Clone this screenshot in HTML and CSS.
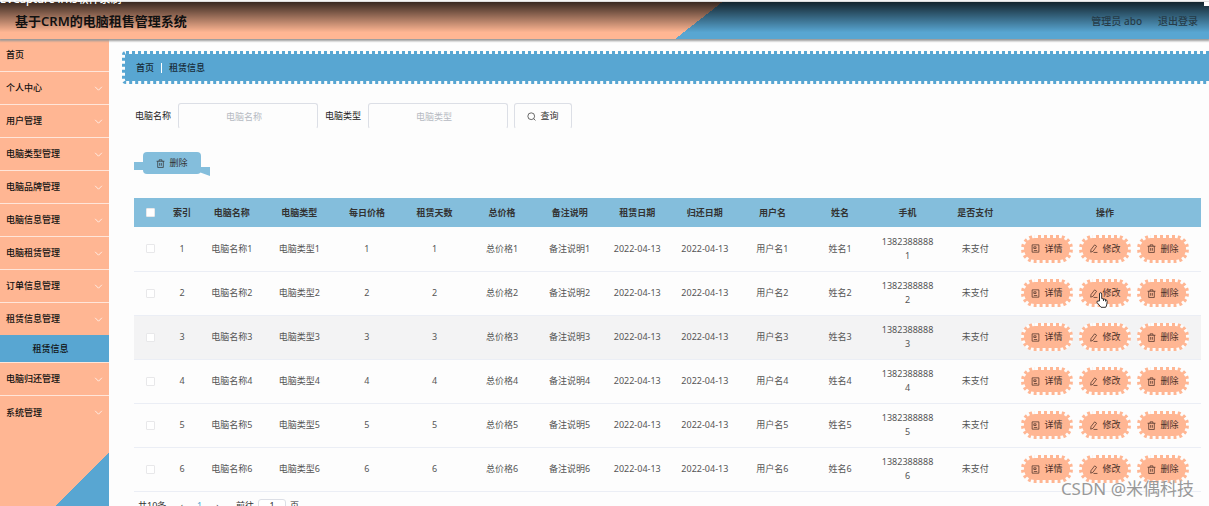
FILE: index.html
```html
<!DOCTYPE html>
<html lang="zh-CN">
<head>
<meta charset="utf-8">
<title>基于CRM的电脑租售管理系统</title>
<link rel="stylesheet" href="styles.css">
</head>
<body>
<svg class="sprite" aria-hidden="true">
  <symbol id="i-trash" viewBox="0 0 16 16"><path d="M1 4h14M5.500 4V1.500h5V4M3 4v11h10V4M6.500 7v5M9.500 7v5"/></symbol>
  <symbol id="i-doc" viewBox="0 0 16 16"><path d="M2 1.500h12v13H2zM5 5h4v3H5zM5 11.500h6"/></symbol>
  <symbol id="i-edit" viewBox="0 0 16 16"><path d="M10 1.500l3.500 2.500-6.500 9-4 1.500.500-4.500zM8 15h7"/></symbol>
  <symbol id="i-search" viewBox="0 0 16 16"><circle cx="7.500" cy="7.500" r="6"/><path d="M12 12l3 3"/></symbol>
  <symbol id="i-down" viewBox="0 0 16 16"><path d="M2 5l6 6 6-6"/></symbol>
</svg>
<div class="recorder"><span>EVCapture irhs软件录制</span><i class="recorder-mark"></i></div>
<header class="topbar">
  <h1 class="brand">基于CRM的电脑租售管理系统</h1>
  <nav class="account"><span>管理员 abo</span><a href="#">退出登录</a></nav>
</header>
<div class="shell">
  <aside class="sidebar">
    <ul class="menu" id="menu"></ul>
  </aside>
  <main class="content">
    <nav class="crumbs"><a href="#">首页</a><span class="crumb-sep"></span><span>租赁信息</span></nav>
    <form class="search">
      <label class="field-label" for="name">电脑名称</label>
      <input class="field" id="name" type="text" placeholder="电脑名称">
      <label class="field-label" for="type">电脑类型</label>
      <input class="field" id="type" type="text" placeholder="电脑类型">
      <button class="query" type="button"><svg class="icon"><use href="#i-search"/></svg>查询</button>
    </form>
    <div class="tools">
      <button class="bulk-delete" type="button"><svg class="icon"><use href="#i-trash"/></svg>删除</button>
    </div>
    <table class="grid">
      <colgroup><col class="col-narrow"><col class="col-narrow"><col span="12"><col class="col-actions"></colgroup>
      <thead><tr id="head"></tr></thead>
      <tbody id="rows"></tbody>
    </table>
    <div class="pager">
      <span>共10条</span>
      <button type="button" aria-label="上一页">‹</button>
      <button type="button" class="current">1</button>
      <button type="button" aria-label="下一页">›</button>
      <label class="jump">前往 <input class="jump-page" type="text" value="1"> 页</label>
    </div>
  </main>
</div>
<svg class="cursor" viewBox="0 0 12 16" aria-hidden="true"><path d="M3.500 9V2q0-1.300 1.100-1.300T5.700 2v4.500l3.500.800q2 .5 2 2.200l-.5 3.500-1 2.300H5L1 10.500q-.5-1.500 1-1.500z"/><path d="M7.500 7v2M9.500 7.500v2"/></svg>
<div class="watermark">CSDN @米偶科技</div>
<script src="app.js"></script>
</body>
</html>
```
FILE: styles.css
```css
* { box-sizing: border-box; }
body {
  margin: 0;
  height: 100vh;
  overflow: hidden;
  display: flex;
  flex-direction: column;
  background: #fdfdfd;
  color: #333;
  font: 9px/14px "Noto Sans", "Noto Sans CJK SC", sans-serif;
}
button, input { font: inherit; color: inherit; }
a { color: inherit; text-decoration: none; }
.sprite { position: absolute; width: 0; height: 0; }
.icon { width: 9px; height: 9px; fill: none; stroke: currentColor; stroke-width: 1.3; flex: none; }

.recorder {
  position: absolute;
  z-index: 2;
  top: 0;
  left: 0;
  width: 100%;
  height: 6px;
  overflow: hidden;
  display: flex;
  align-items: flex-end;
  justify-content: space-between;
  color: #fff;
  font-size: 11px;
  font-weight: 500;
}
.recorder-mark { width: 5px; height: 4px; background: #fff; }

.topbar {
  position: relative;
  z-index: 1;
  flex: none;
  display: flex;
  align-items: center;
  justify-content: space-between;
  height: 37px;
  margin-top: 2px;
  padding: 0 11px 0 15px;
  background:
    linear-gradient(rgba(0, 0, 0, .78), rgba(0, 0, 0, 0) 82%),
    linear-gradient(142deg, #ffb693 57.5%, #58a6d2 57.5%);
  box-shadow: 0 1px 2px 1px #999;
}
.brand { margin: 0; font-size: 13px; line-height: 20px; font-weight: 600; color: #111; }
.account { display: flex; gap: 16px; font-size: 10px; font-weight: 500; color: #263c49; }

.shell { flex: 1; min-height: 0; display: flex; }
.sidebar {
  flex: none;
  width: 109px;
  background: linear-gradient(135deg, transparent 50%, #58a6d2 50%) right bottom / 53px 53px no-repeat #ffb693;
}
.menu { margin: 0; padding: 0; list-style: none; }
.menu-link {
  display: flex;
  align-items: center;
  justify-content: space-between;
  height: 33px;
  padding: 0 6px;
  border-bottom: 1px solid #ffe6da;
  color: #111;
  font-weight: 500;
}
.menu-item:last-child .menu-link { border: 0; }
.menu-link .icon { color: #fff; }
.submenu {
  display: block;
  height: 28px;
  line-height: 27px;
  margin-top: -1px;
  border-bottom: 1px solid #ffe6da;
  background: #58a6d2;
  text-align: center;
  padding-right: 8px;
  color: #111;
  font-weight: 500;
}

.content { flex: 1; min-width: 0; padding: 12px 8px 0 25px; }
.crumbs {
  display: flex;
  align-items: center;
  gap: 7px;
  height: 33px;
  margin: 0 -16px 0 -12px;
  padding: 0 11px;
  border: 3px dotted #58a6d2;
  border-radius: 4px;
  background: #58a6d2 padding-box;
  color: #172b38;
  font-weight: 500;
}
.crumb-sep { width: 1px; height: 10px; background: #fff; }

.search { display: flex; align-items: center; height: 26px; margin-top: 19px; }
.field-label { width: 44px; padding-left: 1px; color: #222; }
.field {
  width: 140px;
  height: 26px;
  margin-right: 6px;
  padding: 0 10px 0 2px;
  border: 1px solid #dcdfe6;
  border-bottom-color: transparent;
  border-radius: 3px;
  background: transparent;
  text-align: center;
}
.field::placeholder { color: #b6bac2; opacity: 1; }
.query {
  display: flex;
  align-items: center;
  justify-content: center;
  gap: 4px;
  width: 58px;
  height: 26px;
  padding: 0;
  border: 1px solid #dcdfe6;
  border-bottom-color: transparent;
  border-radius: 3px;
  background: transparent;
}

.tools { padding: 23px 9px 24px; }
.bulk-delete {
  position: relative;
  display: flex;
  align-items: center;
  justify-content: center;
  gap: 4px;
  width: 58px;
  height: 22px;
  padding: 0;
  border: 0;
  border-radius: 4px;
  background: #84bedc;
}
.bulk-delete::before, .bulk-delete::after { content: ""; position: absolute; background: #84bedc; }
.bulk-delete::before { left: -9px; top: 10px; width: 10px; height: 8px; }
.bulk-delete::after { right: -9px; top: 15px; width: 11px; height: 9px; clip-path: polygon(0 0, 100% 0, 100% 100%, 0 56%); }

.grid { width: 100%; table-layout: fixed; border-collapse: collapse; text-align: center; }
.col-narrow { width: 32px; }
.col-actions { width: 192px; }
.grid th { height: 29px; padding: 0; background: #84bedc; font-weight: 600; }
.grid td { height: 44px; padding: 0 7px; border-bottom: 1px solid #ebeef5; word-break: break-all; color: #555; }
.grid th:first-child, .grid td:first-child, .grid td:last-child { padding: 0; }
.grid .hovered td { background: #f3f3f4; }
.check { appearance: none; display: block; width: 9px; height: 9px; margin: 0 auto; border: 1px solid #e8e8ea; border-radius: 1px; background: #fff; }
.actions { display: flex; justify-content: center; gap: 6px; }
.action {
  display: flex;
  align-items: center;
  justify-content: center;
  gap: 4px;
  width: 52px;
  height: 28px;
  padding: 0;
  border: 3px dotted #fdfdfd;
  border-radius: 14px;
  background: #ffb693 border-box;
  color: #4a3028;
}

.pager { display: flex; align-items: center; gap: 14px; margin-top: 7px; padding-left: 4px; }
.pager button { padding: 0; border: 0; background: none; }
.pager .current { color: #58a6d2; }
.jump { display: flex; align-items: center; gap: 4px; margin-left: 3px; }
.jump-page { width: 28px; height: 14px; padding: 0; border: 1px solid #dcdfe6; border-radius: 3px; text-align: center; }

.cursor { position: absolute; left: 1096px; top: 292px; width: 12px; height: 16px; fill: #fff; stroke: #333; stroke-width: 1; }
.watermark {
  position: absolute;
  right: 15px;
  bottom: 6px;
  color: #999;
  font-size: 17px;
  line-height: 22px;
  text-shadow: 0 0 1px #fff;
}
```
FILE: app.js
```js
const icon = (name) => `<svg class="icon"><use href="#i-${name}"/></svg>`;

const menu = ["首页", "个人中心", "用户管理", "电脑类型管理", "电脑品牌管理", "电脑信息管理",
  "电脑租赁管理", "订单信息管理", "租赁信息管理", "电脑归还管理", "系统管理"];
document.getElementById("menu").innerHTML = menu.map((label, i) => `
  <li class="menu-item"><a class="menu-link" href="#">${label}${i ? icon("down") : ""}</a>
  ${label === "租赁信息管理" ? '<a class="submenu" href="#">租赁信息</a>' : ""}</li>`).join("");

const heads = ["索引", "电脑名称", "电脑类型", "每日价格", "租赁天数", "总价格", "备注说明",
  "租赁日期", "归还日期", "用户名", "姓名", "手机", "是否支付", "操作"];
document.getElementById("head").innerHTML =
  '<th><input class="check" type="checkbox" aria-label="全选"></th>' +
  heads.map((h) => `<th>${h}</th>`).join("");

const action = (name, label) => `<button class="action" type="button">${icon(name)}${label}</button>`;
document.getElementById("rows").innerHTML = [1, 2, 3, 4, 5, 6].map((n) => {
  const cells = [n, "电脑名称" + n, "电脑类型" + n, n, n, "总价格" + n, "备注说明" + n,
    "2022-04-13", "2022-04-13", "用户名" + n, "姓名" + n, "1382388888" + n, "未支付"];
  return `<tr class="${n === 3 ? "hovered" : ""}">
    <td><input class="check" type="checkbox" aria-label="选择第${n}行"></td>
    ${cells.map((c) => `<td>${c}</td>`).join("")}
    <td><div class="actions">${action("doc", "详情")}${action("edit", "修改")}${action("trash", "删除")}</div></td>
  </tr>`;
}).join("");
```
